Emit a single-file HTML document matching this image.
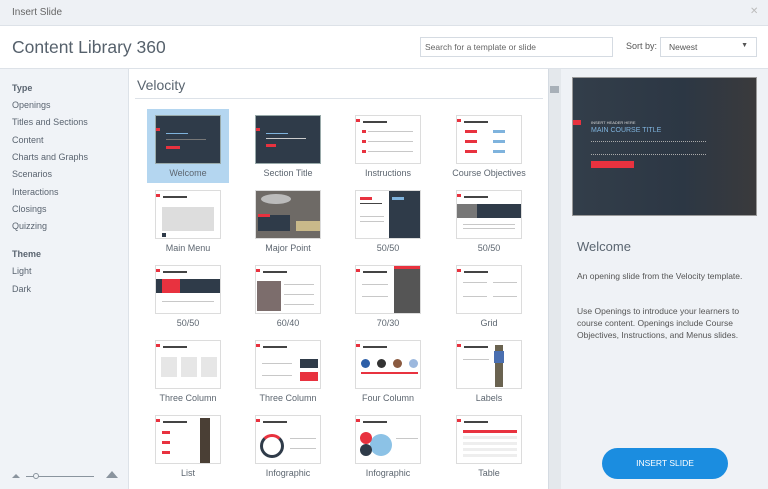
<!DOCTYPE html>
<html><head><meta charset="utf-8"><style>
*{margin:0;padding:0;box-sizing:border-box}
body{width:768px;height:489px;overflow:hidden;font-family:"Liberation Sans",sans-serif;background:#fff;position:relative;color:#555}
.a{position:absolute}
.tb{left:0;top:0;width:768px;height:26px;background:#eef1f5;border-bottom:1px solid #dde2e8}
.side{left:0;top:69px;width:129px;height:420px;background:#f0f3f7;border-right:1px solid #dde2e8}
.side div{position:absolute;left:12px;font-size:9px;color:#5a6470}
.thumb{position:absolute;width:66px;height:49px;background:#fff;border:1px solid #dcdcdc;overflow:hidden}
.dk{background:#2f3b49;border-color:#9aa}
.lbl{position:absolute;width:100px;text-align:center;font-size:9px;color:#5d6670}
.r{position:absolute;left:0;top:3px;width:4px;height:3px;background:#e8323f}
.t{position:absolute;left:7px;top:5px;width:24px;height:2px;background:#444}
.l{position:absolute;height:1px;background:#c8c8c8}
</style></head><body>
<div class="a tb"></div>
<div class="a" style="left:12px;top:7px;font-size:10px;color:#666">Insert Slide</div>
<div class="a" style="left:750px;top:6px;font-size:10px;color:#bbb">✕</div>
<div class="a" style="left:12px;top:37px;font-size:17.5px;color:#56616c">Content Library 360</div>
<div class="a" style="left:420px;top:37px;width:193px;height:20px;border:1px solid #d5dbe2;font-size:8.5px;color:#666;padding:4px 4px">Search for a template or slide</div>
<div class="a" style="left:626px;top:41px;font-size:9px;color:#555">Sort by:</div>
<div class="a" style="left:660px;top:37px;width:97px;height:20px;border:1px solid #d5dbe2;font-size:8.5px;color:#555;padding:4px 8px">Newest<span style="position:absolute;right:8px;top:4px;font-size:7px">▼</span></div>
<div class="a" style="left:0;top:68px;width:768px;height:1px;background:#dde2e8"></div>
<div class="a side">
<div style="top:14px;font-weight:bold">Type</div>
<div style="top:31px">Openings</div>
<div style="top:48px">Titles and Sections</div>
<div style="top:66px">Content</div>
<div style="top:83px">Charts and Graphs</div>
<div style="top:100px">Scenarios</div>
<div style="top:118px">Interactions</div>
<div style="top:135px">Closings</div>
<div style="top:152px">Quizzing</div>
<div style="top:180px;font-weight:bold">Theme</div>
<div style="top:197px">Light</div>
<div style="top:215px">Dark</div>
<div style="top:405px;left:12px;width:0;height:0;border-left:4px solid transparent;border-right:4px solid transparent;border-bottom:4px solid #8a949e"></div>
<div style="top:407px;left:26px;width:68px;height:1px;background:#8a949e"></div>
<div style="top:404px;left:33px;width:6px;height:6px;border:1px solid #8a949e;border-radius:50%;background:#f0f3f7"></div>
<div style="top:402px;left:106px;width:0;height:0;border-left:6px solid transparent;border-right:6px solid transparent;border-bottom:7px solid #8a949e"></div>
</div>
<div class="a" style="left:137px;top:77px;font-size:14px;color:#5a6570">Velocity</div>
<div class="a" style="left:135px;top:98px;width:408px;height:1px;background:#dde2e8"></div>
<div class="a" style="left:548px;top:69px;width:13px;height:420px;background:#e4e8ec;border-left:1px solid #d5dbe2"></div>
<div class="a" style="left:550px;top:86px;width:9px;height:7px;background:#a8b0b8"></div>
<div class="a" style="left:561px;top:69px;width:207px;height:420px;background:#eff2f6"></div>
<div class="a" style="left:572px;top:77px;width:185px;height:139px;background:linear-gradient(90deg,#333e4a,#2c3744 60%,#3a3a3c);border:1px solid #999">
<div class="a" style="left:0;top:42px;width:8px;height:5px;background:#e8323f"></div>
<div class="a" style="left:18px;top:42px;font-size:4px;color:#ddd">INSERT HEADER HERE</div>
<div class="a" style="left:18px;top:49px;font-size:7px;color:#7fb3dd">MAIN COURSE TITLE</div>
<div class="a" style="left:18px;top:63px;width:115px;height:14px;border-top:1px dotted #aaa;border-bottom:1px dotted #aaa"></div>
<div class="a" style="left:18px;top:83px;width:43px;height:7px;background:#e8323f"></div>
</div>
<div class="a" style="left:577px;top:239px;font-size:13px;color:#5a6570">Welcome</div>
<div class="a" style="left:577px;top:271px;font-size:8.5px;color:#555">An opening slide from the Velocity template.</div>
<div class="a" style="left:577px;top:305px;width:185px;font-size:8.5px;line-height:12px;color:#555">Use Openings to introduce your learners to course content. Openings include Course Objectives, Instructions, and Menus slides.</div>
<div class="a" style="left:602px;top:448px;width:126px;height:31px;background:#1b8de0;border-radius:16px;color:#fff;font-size:8.5px;text-align:center;line-height:31px">INSERT SLIDE</div>
<div class="a" style="left:147px;top:109px;width:82px;height:74px;background:#b4d6f0"></div>

<!-- row 1 -->
<div class="thumb dk" style="left:155px;top:115px"><div class="r" style="top:12px"></div><div class="l" style="left:10px;top:17px;width:22px;background:#7fb3dd"></div><div class="l" style="left:10px;top:23px;width:40px;background:#777"></div><div class="a" style="left:10px;top:30px;width:14px;height:3px;background:#e8323f"></div></div>
<div class="thumb dk" style="left:255px;top:115px"><div class="r" style="top:12px"></div><div class="l" style="left:10px;top:17px;width:22px;background:#7fb3dd"></div><div class="l" style="left:10px;top:22px;width:40px;background:#ccc"></div><div class="a" style="left:10px;top:28px;width:10px;height:3px;background:#e8323f"></div></div>
<div class="thumb" style="left:355px;top:115px"><div class="r"></div><div class="t"></div><div class="a" style="left:6px;top:14px;width:4px;height:3px;background:#e8323f"></div><div class="a" style="left:6px;top:24px;width:4px;height:3px;background:#e8323f"></div><div class="a" style="left:6px;top:34px;width:4px;height:3px;background:#e8323f"></div><div class="l" style="left:12px;top:15px;width:45px"></div><div class="l" style="left:12px;top:25px;width:45px"></div><div class="l" style="left:12px;top:35px;width:45px"></div></div>
<div class="thumb" style="left:456px;top:115px"><div class="r"></div><div class="t"></div><div class="a" style="left:8px;top:14px;width:12px;height:3px;background:#e8323f"></div><div class="a" style="left:8px;top:24px;width:12px;height:3px;background:#e8323f"></div><div class="a" style="left:8px;top:34px;width:12px;height:3px;background:#e8323f"></div><div class="a" style="left:36px;top:14px;width:12px;height:3px;background:#7fb3dd"></div><div class="a" style="left:36px;top:24px;width:12px;height:3px;background:#7fb3dd"></div><div class="a" style="left:36px;top:34px;width:12px;height:3px;background:#7fb3dd"></div></div>
<div class="lbl" style="left:138px;top:168px">Welcome</div>
<div class="lbl" style="left:238px;top:168px">Section Title</div>
<div class="lbl" style="left:338px;top:168px">Instructions</div>
<div class="lbl" style="left:439px;top:168px">Course Objectives</div>
<!-- row 2 -->
<div class="thumb" style="left:155px;top:190px"><div class="r"></div><div class="t"></div><div class="a" style="left:6px;top:16px;width:52px;height:24px;background:#ddd"></div><div class="a" style="left:6px;top:42px;width:4px;height:4px;background:#2f3b49"></div></div>
<div class="thumb" style="left:255px;top:190px;background:#6e6a66"><div class="a" style="left:5px;top:3px;width:30px;height:10px;border-radius:50%;background:#bbb"></div><div class="a" style="left:40px;top:30px;width:24px;height:10px;background:#c9b98a"></div><div class="a" style="left:2px;top:24px;width:32px;height:16px;background:#2f3b49"></div><div class="a" style="left:2px;top:23px;width:12px;height:3px;background:#e8323f"></div></div>
<div class="thumb" style="left:355px;top:190px"><div class="a" style="left:33px;top:0;width:33px;height:49px;background:#2f3b49"></div><div class="a" style="left:4px;top:6px;width:12px;height:3px;background:#e8323f"></div><div class="l" style="left:4px;top:12px;width:22px;background:#444"></div><div class="l" style="left:4px;top:25px;width:24px"></div><div class="l" style="left:4px;top:30px;width:24px"></div><div class="a" style="left:36px;top:6px;width:12px;height:3px;background:#7fb3dd"></div></div>
<div class="thumb" style="left:456px;top:190px"><div class="r"></div><div class="t"></div><div class="a" style="left:0;top:13px;width:66px;height:14px;background:#2f3b49"></div><div class="a" style="left:0;top:13px;width:20px;height:14px;background:#777"></div><div class="l" style="left:6px;top:33px;width:52px"></div><div class="l" style="left:6px;top:37px;width:52px"></div></div>
<div class="lbl" style="left:138px;top:243px">Main Menu</div>
<div class="lbl" style="left:238px;top:243px">Major Point</div>
<div class="lbl" style="left:338px;top:243px">50/50</div>
<div class="lbl" style="left:439px;top:243px">50/50</div>
<!-- row 3 -->
<div class="thumb" style="left:155px;top:265px"><div class="r"></div><div class="t"></div><div class="a" style="left:0;top:13px;width:66px;height:14px;background:#2f3b49"></div><div class="a" style="left:6px;top:13px;width:18px;height:14px;background:#e8323f"></div><div class="l" style="left:6px;top:35px;width:52px"></div></div>
<div class="thumb" style="left:255px;top:265px"><div class="r"></div><div class="t"></div><div class="a" style="left:1px;top:15px;width:24px;height:30px;background:#7c6d6c"></div><div class="l" style="left:28px;top:18px;width:30px"></div><div class="l" style="left:28px;top:28px;width:30px"></div><div class="l" style="left:28px;top:38px;width:30px"></div></div>
<div class="thumb" style="left:355px;top:265px"><div class="r"></div><div class="t"></div><div class="a" style="left:38px;top:0;width:28px;height:49px;background:#555"></div><div class="a" style="left:38px;top:0;width:28px;height:3px;background:#e8323f"></div><div class="l" style="left:6px;top:18px;width:26px"></div><div class="l" style="left:6px;top:30px;width:26px"></div></div>
<div class="thumb" style="left:456px;top:265px"><div class="r"></div><div class="t"></div><div class="l" style="left:6px;top:16px;width:24px"></div><div class="l" style="left:36px;top:16px;width:24px"></div><div class="l" style="left:6px;top:30px;width:24px"></div><div class="l" style="left:36px;top:30px;width:24px"></div></div>
<div class="lbl" style="left:138px;top:318px">50/50</div>
<div class="lbl" style="left:238px;top:318px">60/40</div>
<div class="lbl" style="left:338px;top:318px">70/30</div>
<div class="lbl" style="left:439px;top:318px">Grid</div>
<!-- row 4 -->
<div class="thumb" style="left:155px;top:340px"><div class="r"></div><div class="t"></div><div class="a" style="left:5px;top:16px;width:16px;height:20px;background:#e6e6e6"></div><div class="a" style="left:25px;top:16px;width:16px;height:20px;background:#e6e6e6"></div><div class="a" style="left:45px;top:16px;width:16px;height:20px;background:#e6e6e6"></div></div>
<div class="thumb" style="left:255px;top:340px"><div class="r"></div><div class="t"></div><div class="a" style="left:44px;top:18px;width:18px;height:9px;background:#2f3b49"></div><div class="a" style="left:44px;top:31px;width:18px;height:9px;background:#e8323f"></div><div class="l" style="left:6px;top:22px;width:30px"></div><div class="l" style="left:6px;top:34px;width:30px"></div></div>
<div class="thumb" style="left:355px;top:340px"><div class="r"></div><div class="t"></div><div class="a" style="left:5px;top:18px;width:9px;height:9px;border-radius:50%;background:#2d5fa8"></div><div class="a" style="left:21px;top:18px;width:9px;height:9px;border-radius:50%;background:#333"></div><div class="a" style="left:37px;top:18px;width:9px;height:9px;border-radius:50%;background:#8a5a40"></div><div class="a" style="left:53px;top:18px;width:9px;height:9px;border-radius:50%;background:#9cb8de"></div><div class="a" style="left:5px;top:31px;width:57px;height:2px;background:#e8323f"></div></div>
<div class="thumb" style="left:456px;top:340px"><div class="r"></div><div class="t"></div><div class="a" style="left:38px;top:4px;width:8px;height:42px;background:#6a6350"></div><div class="a" style="left:37px;top:10px;width:10px;height:12px;background:#4a6fb0"></div><div class="l" style="left:6px;top:18px;width:26px"></div></div>
<div class="lbl" style="left:138px;top:393px">Three Column</div>
<div class="lbl" style="left:238px;top:393px">Three Column</div>
<div class="lbl" style="left:338px;top:393px">Four Column</div>
<div class="lbl" style="left:439px;top:393px">Labels</div>
<!-- row 5 -->
<div class="thumb" style="left:155px;top:415px"><div class="r"></div><div class="t"></div><div class="a" style="left:44px;top:2px;width:10px;height:46px;background:#4a3f35"></div><div class="a" style="left:6px;top:15px;width:8px;height:3px;background:#e8323f"></div><div class="a" style="left:6px;top:25px;width:8px;height:3px;background:#e8323f"></div><div class="a" style="left:6px;top:35px;width:8px;height:3px;background:#e8323f"></div></div>
<div class="thumb" style="left:255px;top:415px"><div class="r"></div><div class="t"></div><div class="a" style="left:4px;top:18px;width:24px;height:24px;border-radius:50%;border:3px solid #2f3b49;border-top-color:#e8323f"></div><div class="l" style="left:34px;top:22px;width:26px"></div><div class="l" style="left:34px;top:32px;width:26px"></div></div>
<div class="thumb" style="left:355px;top:415px"><div class="r"></div><div class="t"></div><div class="a" style="left:14px;top:18px;width:22px;height:22px;border-radius:50%;background:#8cc2e6"></div><div class="a" style="left:4px;top:16px;width:12px;height:12px;border-radius:50%;background:#e8323f"></div><div class="a" style="left:4px;top:28px;width:12px;height:12px;border-radius:50%;background:#2f3b49"></div><div class="l" style="left:40px;top:22px;width:22px"></div></div>
<div class="thumb" style="left:456px;top:415px"><div class="r"></div><div class="t"></div><div class="a" style="left:6px;top:14px;width:54px;height:3px;background:#e8323f"></div><div class="a" style="left:6px;top:20px;width:54px;height:22px;background:repeating-linear-gradient(#eee 0 3px,#fff 3px 6px)"></div></div>
<div class="lbl" style="left:138px;top:468px">List</div>
<div class="lbl" style="left:238px;top:468px">Infographic</div>
<div class="lbl" style="left:338px;top:468px">Infographic</div>
<div class="lbl" style="left:439px;top:468px">Table</div>
</body></html>
